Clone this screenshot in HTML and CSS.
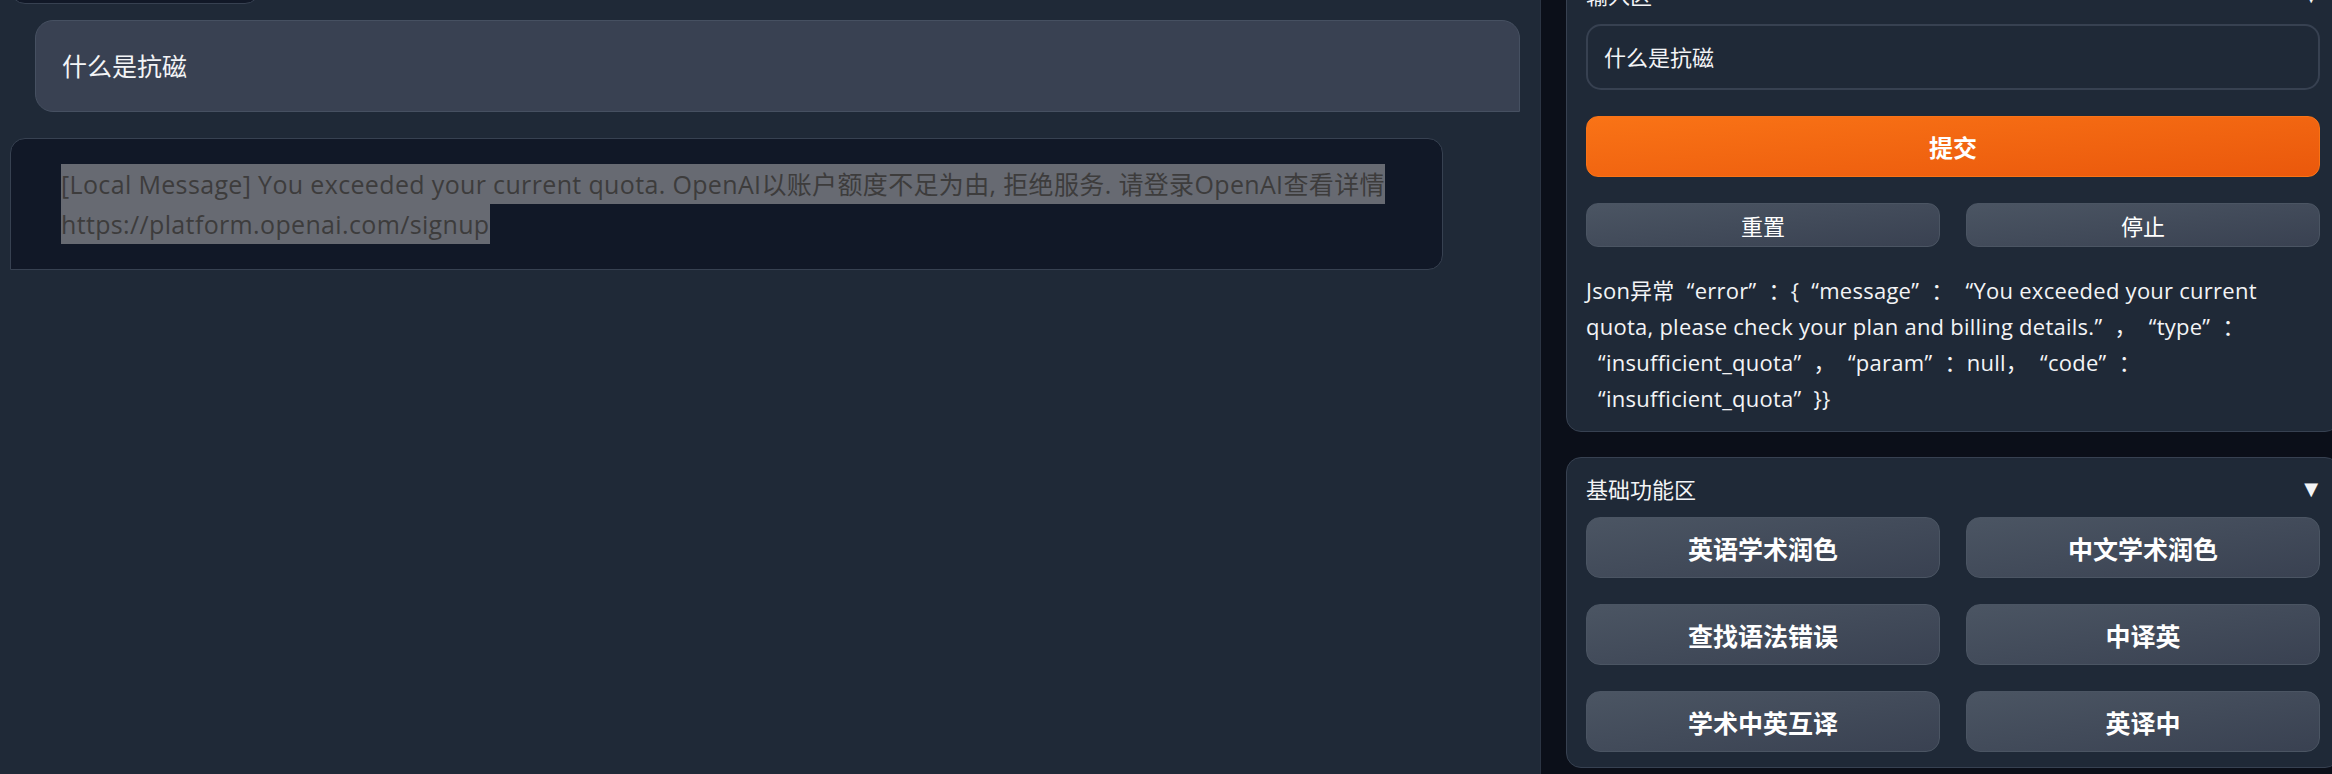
FILE: index.html
```html
<!DOCTYPE html>
<html lang="zh-CN">
<head>
    <meta charset="UTF-8">
    <meta name="viewport" content="width=device-width, initial-scale=1.0">
    <title>ChatGPT 学术优化</title>
    <link rel="stylesheet" href="styles.css">
</head>
<body>
    <div class="app">
        <div class="chat">
            <div class="msg prev"></div>
            <div class="msg user">什么是抗磁</div>
            <div class="msg bot"><span class="sel">[Local Message] You exceeded your current quota. OpenAI以账户额度不足为由, 拒绝服务. 请登录OpenAI查看详情 https://platform.openai.com/signup</span></div>
        </div>

        <div class="side">
            <div class="panel input-panel">
                <div class="panel-head">
                    <span>输入区</span>
                    <span class="arrow">▼</span>
                </div>
                <textarea class="prompt" readonly>什么是抗磁</textarea>
                <button class="btn primary">提交</button>
                <div class="btn-row">
                    <button class="btn secondary small">重置</button>
                    <button class="btn secondary small">停止</button>
                </div>
                <p class="status">Json异常<span class="qo">“</span>error<span class="qc">”</span>：{<span class="qo">“</span>message<span class="qc">”</span>：<span class="qo">“</span>You exceeded your current quota, please check your plan and billing details.<span class="qc">”</span>，<span class="qo">“</span>type<span class="qc">”</span>：<span class="qo">“</span>insufficient_quota<span class="qc">”</span>，<span class="qo">“</span>param<span class="qc">”</span>：null，<span class="qo">“</span>code<span class="qc">”</span>：<span class="qo">“</span>insufficient_quota<span class="qc">”</span>}}</p>
            </div>

            <div class="panel">
                <div class="panel-head">
                    <span>基础功能区</span>
                    <span class="arrow">▼</span>
                </div>
                <div class="btn-grid">
                    <button class="btn secondary">英语学术润色</button>
                    <button class="btn secondary">中文学术润色</button>
                    <button class="btn secondary">查找语法错误</button>
                    <button class="btn secondary">中译英</button>
                    <button class="btn secondary">学术中英互译</button>
                    <button class="btn secondary">英译中</button>
                </div>
            </div>
        </div>
    </div>
</body>
</html>
```

FILE: styles.css
```css
body {
    margin: 0;
    height: 100vh;
    overflow: hidden;
    background-color: #0b0f19;
    color: #f3f4f6;
    font-family: "Open Sans", "Noto Sans CJK SC", sans-serif;
}
.app {
    display: flex;
    height: 100vh;
}
.chat {
    flex: none;
    width: 1541px;
    height: 100%;
    padding: 0 20px 0 10px;
    box-sizing: border-box;
    background-color: #1f2937;
    border-right: 1px solid #2b3443;
}
.msg {
    box-sizing: border-box;
    border: 1px solid #374151;
    font-size: 25px;
}
.msg.prev {
    width: 250px;
    height: 50px;
    margin-top: -46px;
    border-radius: 0 0 15px 15px;
    background-color: #111827;
}
.msg.user {
    margin: 16px 0 0 25px;
    padding: 27px 26px;
    line-height: 36px;
    border-color: #465061;
    border-radius: 18px 18px 0 18px;
    background-color: #394152;
}
.msg.bot {
    margin: 26px 77px 0 0;
    padding: 25px 20px 25px 50px;
    line-height: 40px;
    letter-spacing: 0.35px;
    border-radius: 15px 15px 15px 0;
    background-color: #111827;
}
.sel {
    padding: 3px 0;
    background-color: #676a72;
    color: #3d3c3c;
    -webkit-box-decoration-break: clone;
    box-decoration-break: clone;
}
.side {
    flex: none;
    width: 774px;
    margin-left: 25px;
}
.panel {
    padding: 16px 19px 15px;
    border: 1px solid #374151;
    border-radius: 15px;
    background-color: #1f2937;
}
.input-panel {
    margin-top: -37px;
    margin-bottom: 25px;
}
.panel-head {
    display: flex;
    justify-content: space-between;
    align-items: center;
    height: 30px;
    font-size: 22px;
    line-height: 30px;
    margin-bottom: 14px;
}
.panel-head .arrow {
    font-size: 18px;
    font-family: "DejaVu Sans", sans-serif;
    margin-right: 2px;
}
.prompt {
    display: block;
    width: 100%;
    height: 66px;
    box-sizing: border-box;
    margin: 0 0 26px;
    padding: 16px 16px;
    border: 2px solid #374151;
    border-radius: 15px;
    background-color: #1f2937;
    color: #f3f4f6;
    font-family: inherit;
    font-size: 22px;
    line-height: 30px;
    resize: none;
    outline: none;
}
.btn {
    display: block;
    width: 100%;
    box-sizing: border-box;
    border: 1px solid #4b5563;
    border-radius: 14px;
    color: #fff;
    font-family: inherit;
    font-size: 25px;
    font-weight: bold;
    cursor: pointer;
}
.btn.primary {
    height: 61px;
    margin-bottom: 26px;
    border-color: #f97316;
    border-radius: 12px;
    font-size: 24px;
    background: linear-gradient(to bottom right, #f97316, #ea580c);
}
.btn.secondary {
    height: 61px;
    background: linear-gradient(to bottom right, #4b5563, #394151);
}
.btn.small {
    height: 44px;
    border-radius: 12px;
    font-size: 22px;
    font-weight: normal;
}
.btn-row {
    display: grid;
    grid-template-columns: 1fr 1fr;
    gap: 26px;
}
.status {
    margin: 25px 0 0;
    font-size: 22px;
    line-height: 36px;
    letter-spacing: 0.25px;
}
/* full-width quotes, as the CJK system font draws them */
.status .qo {
    padding-left: 0.55em;
}
.status .qc {
    padding-right: 0.55em;
}
.panel .panel-head + .btn-grid {
    margin-top: -1px;
}
.btn-grid {
    display: grid;
    grid-template-columns: 1fr 1fr;
    gap: 26px;
}
```
